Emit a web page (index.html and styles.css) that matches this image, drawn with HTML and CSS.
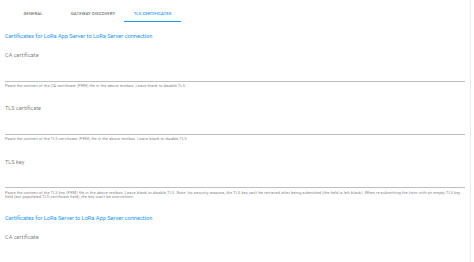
FILE: index.html
```html
<!DOCTYPE html>
<html lang="en">
<head>
<meta charset="utf-8">
<title>TLS certificates</title>
<link rel="stylesheet" href="styles.css">
</head>
<body>
<div class="card">
  <nav class="tabs">
    <div class="tab">General</div>
    <div class="tab">Gateway discovery</div>
    <div class="tab active">TLS certificates</div>
  </nav>
  <form class="form">
    <h2 class="section first">Certificates for LoRa App Server to LoRa Server connection</h2>
    <div class="field">
      <label class="label">CA certificate</label>
      <div class="input"></div>
      <p class="helper">Paste the content of the CA certificate (PEM) file in the above textbox. Leave blank to disable TLS.</p>
    </div>
    <div class="field">
      <label class="label">TLS certificate</label>
      <div class="input"></div>
      <p class="helper">Paste the content of the TLS certificate (PEM) file in the above textbox. Leave blank to disable TLS.</p>
    </div>
    <div class="field last">
      <label class="label">TLS key</label>
      <div class="input"></div>
      <p class="helper">Paste the content of the TLS key (PEM) file in the above textbox. Leave blank to disable TLS. Note: for security reasons, the TLS key can't be retrieved after being submitted (the field is left blank). When re-submitting the form with an empty TLS key field (but populated TLS certificate field), the key won't be overwritten.</p>
    </div>
    <h2 class="section">Certificates for LoRa Server to LoRa App Server connection</h2>
    <div class="field">
      <label class="label">CA certificate</label>
      <div class="input"></div>
    </div>
  </form>
</div>
</body>
</html>
```
FILE: styles.css
```css
html, body {
  margin: 0;
  padding: 0;
  background: #ffffff;
  overflow: hidden;
}
body {
  font-family: Roboto, "Liberation Sans", sans-serif;
  width: 474px;
  height: 262px;
}
.card {
  width: 471px;
  height: 262px;
  border-right: 1px solid #ececec;
  box-sizing: border-box;
  overflow: hidden;
}
.tabs {
  display: flex;
  padding-left: 3px;
}
.tab {
  width: 60px;
  box-sizing: border-box;
  padding-top: 10px;
  height: 22px;
  line-height: 8px;
  font-size: 4.4px;
  font-weight: 500;
  text-transform: uppercase;
  text-align: center;
  color: rgba(0, 0, 0, 0.6);
  border-bottom: 1px solid transparent;
}
.tab.active {
  color: #2196f3;
  border-bottom-color: #2196f3;
  margin-left: 1px;
  width: 57px;
}
.form {
  padding: 0 5px;
  display: flex;
  flex-direction: column;
}
.section {
  margin: 0 0 11px;
  font-size: 5.65px;
  font-weight: 400;
  line-height: 8px;
  color: #2196f3;
}
.section.first {
  margin-top: 10px;
}
.field {
  margin-bottom: 16px;
}
.field.last {
  margin-bottom: 15px;
}
.label {
  display: block;
  font-size: 5.6px;
  line-height: 8px;
  color: rgba(0, 0, 0, 0.54);
}
.input {
  height: 21.5px;
  border-bottom: 1px solid rgba(0, 0, 0, 0.25);
}
.helper {
  margin: 2.5px 0 0;
  font-size: 4.2px;
  line-height: 4.3px;
  color: rgba(0, 0, 0, 0.54);
}
```
